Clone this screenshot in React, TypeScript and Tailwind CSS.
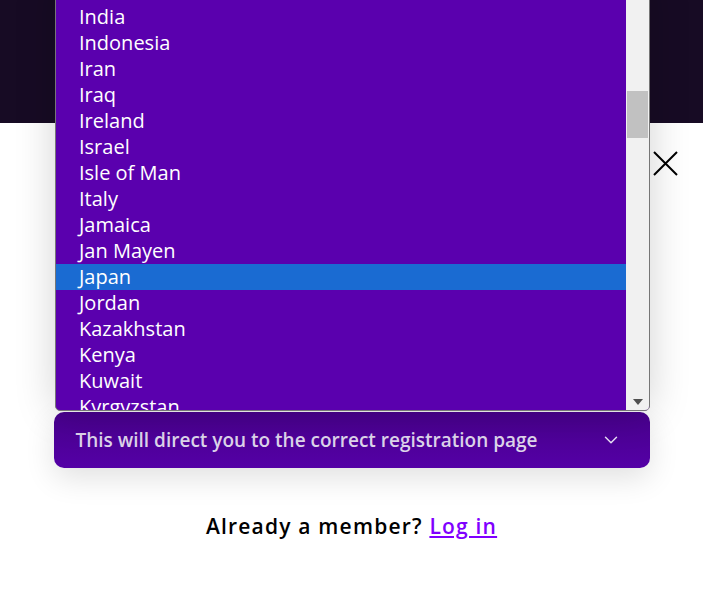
import { ChevronDown } from 'lucide-react';

const countries = [
  'Iceland',
  'India',
  'Indonesia',
  'Iran',
  'Iraq',
  'Ireland',
  'Israel',
  'Isle of Man',
  'Italy',
  'Jamaica',
  'Jan Mayen',
  'Japan',
  'Jordan',
  'Kazakhstan',
  'Kenya',
  'Kuwait',
  'Kyrgyzstan',
];

const font = { fontFamily: '"Open Sans", "Noto Sans", sans-serif' };

export default function App() {
  return (
    <div className="relative w-[703px] h-[597px] overflow-hidden bg-white" style={font}>
      {/* dark header band */}
      <div className="h-[123px] bg-[#170b24]" />

      {/* modal body */}
      <div className="relative flex flex-col items-center">
        <button className="absolute right-[23px] top-[27px] text-black">
          <svg width="28" height="28" viewBox="0 0 28 28" fill="none" stroke="currentColor" strokeWidth="2">
            <path d="M2 2L25 25M25 2L2 25" />
          </svg>
        </button>

        <div className="h-[289px]" />

        <div className="w-[596px] h-[56px] rounded-[10px] bg-gradient-to-b from-[#48008c] to-[#5400a6] flex items-center justify-between pl-[22px] pr-[28px] shadow-[0_10px_30px_rgba(0,0,0,0.12)]">
          <span className="text-[19px] font-semibold text-[#ddd4ea]">
            This will direct you to the correct registration page
          </span>
          <ChevronDown className="w-[22px] h-[22px] text-[#e8e0f4]" strokeWidth={1.6} />
        </div>

        <p className="mt-[43px] text-[21px] font-semibold tracking-[1.2px] text-black">
          Already a member?{' '}
          <a href="#" className="text-[#7f00ff] underline underline-offset-2">Log in</a>
        </p>
      </div>

      {/* open select listbox */}
      <div className="absolute left-[55px] top-[-23px] w-[595px] h-[434px] flex border border-[#767676] rounded-b-[5px] overflow-hidden bg-[#5a00ae] shadow-[0_0_40px_rgba(0,0,0,0.18)]">
        <ul className="flex-1">
          {countries.map((c) => (
            <li
              key={c}
              className={`h-[26px] pl-[23px] flex items-center text-[20px] text-white ${
                c === 'Japan' ? 'bg-[#1a6bd2]' : ''
              }`}
            >
              {c}
            </li>
          ))}
        </ul>
        <div className="w-[23px] bg-[#f1f1f1] flex flex-col">
          <div className="h-[113px]" />
          <div className="h-[47px] mx-[1px] bg-[#c1c1c1]" />
          <div className="flex-1" />
          <div className="h-[17px] flex items-center justify-center">
            <svg width="10" height="6" viewBox="0 0 10 6">
              <path d="M0 0H10L5 6Z" fill="#505050" />
            </svg>
          </div>
        </div>
      </div>
    </div>
  );
}
